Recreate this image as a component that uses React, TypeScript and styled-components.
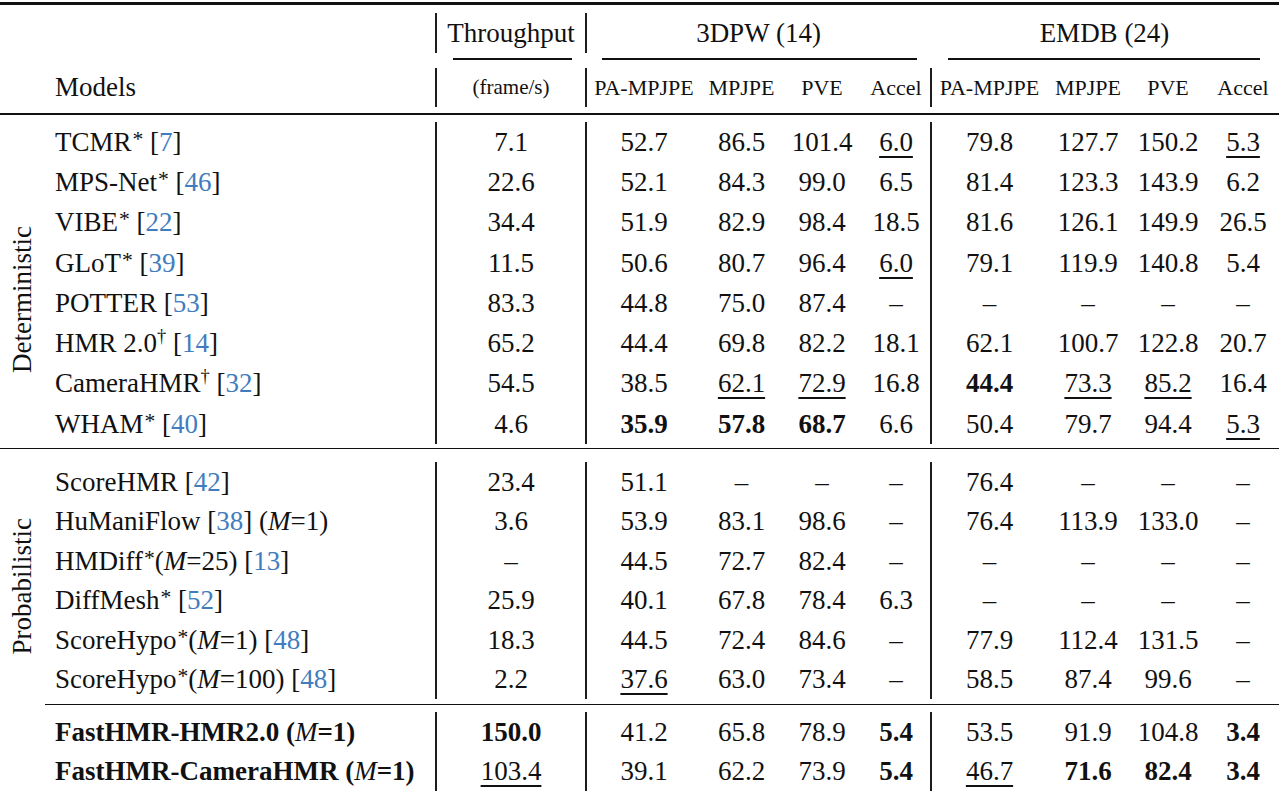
import React from 'react';
import styled, { createGlobalStyle } from 'styled-components';

const GlobalStyle = createGlobalStyle`
  html, body {
    margin: 0;
    padding: 0;
    background: #fff;
  }
  body {
    font-family: "Liberation Serif", "Times New Roman", serif;
    color: #111;
  }
`;

// '**' prefix = best result (bold), '_' prefix = second best (underlined)
type Val = string;

interface ModelRow {
  name: React.ReactNode;
  values: Val[];
}

const Cite = styled.span`
  color: #417dbe;
`;

const Sup = styled.sup`
  font-size: 0.68em;
  vertical-align: super;
  line-height: 0;
`;

const Star = styled.span`
  font-size: 0.8em;
  vertical-align: 0.22em;
  line-height: 0;
  margin-left: 1px;
`;

const MathVar = styled.i`
  font-style: italic;
  font-weight: 400;
`;

const Bold = styled.b`
  font-weight: 700;
`;

const Underlined = styled.span`
  text-decoration: underline;
  text-decoration-thickness: 1.5px;
  text-underline-offset: 5px;
`;

const ref = (n: number) => (
  <>
    [<Cite>{n}</Cite>]
  </>
);
const star = <Star>*</Star>;
const dagger = <Sup>†</Sup>;
const hyp = (k: number) => (
  <>
    (<MathVar>M</MathVar>={k})
  </>
);

const deterministic: ModelRow[] = [
  { name: <>TCMR{star} {ref(7)}</>, values: ['7.1', '52.7', '86.5', '101.4', '_6.0', '79.8', '127.7', '150.2', '_5.3'] },
  { name: <>MPS-Net{star} {ref(46)}</>, values: ['22.6', '52.1', '84.3', '99.0', '6.5', '81.4', '123.3', '143.9', '6.2'] },
  { name: <>VIBE{star} {ref(22)}</>, values: ['34.4', '51.9', '82.9', '98.4', '18.5', '81.6', '126.1', '149.9', '26.5'] },
  { name: <>GLoT{star} {ref(39)}</>, values: ['11.5', '50.6', '80.7', '96.4', '_6.0', '79.1', '119.9', '140.8', '5.4'] },
  { name: <>POTTER {ref(53)}</>, values: ['83.3', '44.8', '75.0', '87.4', '–', '–', '–', '–', '–'] },
  { name: <>HMR 2.0{dagger} {ref(14)}</>, values: ['65.2', '44.4', '69.8', '82.2', '18.1', '62.1', '100.7', '122.8', '20.7'] },
  { name: <>CameraHMR{dagger} {ref(32)}</>, values: ['54.5', '38.5', '_62.1', '_72.9', '16.8', '**44.4', '_73.3', '_85.2', '16.4'] },
  { name: <>WHAM{star} {ref(40)}</>, values: ['4.6', '**35.9', '**57.8', '**68.7', '6.6', '50.4', '79.7', '94.4', '_5.3'] },
];

const probabilistic: ModelRow[] = [
  { name: <>ScoreHMR {ref(42)}</>, values: ['23.4', '51.1', '–', '–', '–', '76.4', '–', '–', '–'] },
  { name: <>HuManiFlow {ref(38)} {hyp(1)}</>, values: ['3.6', '53.9', '83.1', '98.6', '–', '76.4', '113.9', '133.0', '–'] },
  { name: <>HMDiff{star}{hyp(25)} {ref(13)}</>, values: ['–', '44.5', '72.7', '82.4', '–', '–', '–', '–', '–'] },
  { name: <>DiffMesh{star} {ref(52)}</>, values: ['25.9', '40.1', '67.8', '78.4', '6.3', '–', '–', '–', '–'] },
  { name: <>ScoreHypo{star}{hyp(1)} {ref(48)}</>, values: ['18.3', '44.5', '72.4', '84.6', '–', '77.9', '112.4', '131.5', '–'] },
  { name: <>ScoreHypo{star}{hyp(100)} {ref(48)}</>, values: ['2.2', '_37.6', '63.0', '73.4', '–', '58.5', '87.4', '99.6', '–'] },
];

const ours: ModelRow[] = [
  {
    name: <><Bold>FastHMR-HMR2.0</Bold> <Bold>{hyp(1)}</Bold></>,
    values: ['**150.0', '41.2', '65.8', '78.9', '**5.4', '53.5', '91.9', '104.8', '**3.4'],
  },
  {
    name: <><Bold>FastHMR-CameraHMR</Bold> <Bold>{hyp(1)}</Bold></>,
    values: ['_103.4', '39.1', '62.2', '73.9', '**5.4', '_46.7', '**71.6', '**82.4', '**3.4'],
  },
];

const colWidths = [45, 390, 150, 116, 81, 80, 68, 117, 82, 78, 72];
const metrics = ['PA-MPJPE', 'MPJPE', 'PVE', 'Accel'];

const Page = styled.div`
  width: 1279px;
  height: 797px;
  overflow: hidden;
  background: #fff;
`;

const Table = styled.table`
  width: 1279px;
  table-layout: fixed;
  border-collapse: separate;
  border-spacing: 0;
  font-size: 27px;
`;

const Col = styled.col<{ $w: number }>`
  width: ${p => p.$w}px;
`;

const Row = styled.tr<{ $h: number }>`
  height: ${p => p.$h}px;
`;

const Cell = styled.td<{ $bar?: boolean }>`
  padding: 0;
  text-align: center;
  vertical-align: middle;
  white-space: nowrap;
  line-height: 1;
  border-left: ${p => (p.$bar ? '2px solid #1c1c1c' : 'none')};
`;

const NameCell = styled(Cell)`
  text-align: left;
  padding-left: 10px;
`;

const SubHead = styled(Cell)`
  font-size: 22px;
`;

const UnitHead = styled(Cell)`
  font-size: 21px;
`;

const GroupCell = styled.td<{ $shift: number }>`
  padding: ${p => p.$shift}px 0 0 0;
  vertical-align: middle;
  text-align: center;
`;

const GroupLabel = styled.span`
  display: inline-block;
  writing-mode: vertical-rl;
  transform: rotate(180deg);
  line-height: 1;
  white-space: nowrap;
`;

const RuleCell = styled.td`
  padding: 0;
  vertical-align: top;
  font-size: 0;
  line-height: 0;
`;

const Rule = styled.div<{ $thick: number; $top: number; $l?: number; $r?: number }>`
  height: ${p => p.$thick}px;
  margin: ${p => p.$top}px ${p => p.$r ?? 0}px 0 ${p => p.$l ?? 0}px;
  background: #111;
`;

function Value({ v }: { v: Val }) {
  if (v.startsWith('**')) return <Bold>{v.slice(2)}</Bold>;
  if (v.startsWith('_')) return <Underlined>{v.slice(1)}</Underlined>;
  return <>{v}</>;
}

function ValueCells({ values }: { values: Val[] }) {
  return (
    <>
      {values.map((v, i) => (
        <Cell key={i} $bar={i === 0 || i === 1 || i === 5}>
          <Value v={v} />
        </Cell>
      ))}
    </>
  );
}

export default function App() {
  return (
    <Page>
      <GlobalStyle />
      <Table>
        <colgroup>
          {colWidths.map((w, i) => (
            <Col key={i} $w={w} />
          ))}
        </colgroup>
        <tbody>
          <Row $h={13}>
            <RuleCell colSpan={11}>
              <Rule $thick={2.5} $top={2} />
            </RuleCell>
          </Row>

          <Row $h={40}>
            <Cell colSpan={2} />
            <Cell $bar>Throughput</Cell>
            <Cell $bar colSpan={4}>3DPW (14)</Cell>
            <Cell colSpan={4}>EMDB (24)</Cell>
          </Row>

          <Row $h={15}>
            <RuleCell colSpan={2} />
            <RuleCell>
              <Rule $thick={1.5} $top={5} $l={18} $r={13} />
            </RuleCell>
            <RuleCell colSpan={4}>
              <Rule $thick={1.5} $top={5} $l={17} $r={13} />
            </RuleCell>
            <RuleCell colSpan={4}>
              <Rule $thick={1.5} $top={5} $l={18} $r={19} />
            </RuleCell>
          </Row>

          <Row $h={39}>
            <Cell />
            <NameCell>Models</NameCell>
            <UnitHead $bar>(frame/s)</UnitHead>
            {metrics.map((m, i) => (
              <SubHead key={`a${m}`} $bar={i === 0}>{m}</SubHead>
            ))}
            {metrics.map((m, i) => (
              <SubHead key={`b${m}`} $bar={i === 0}>{m}</SubHead>
            ))}
          </Row>

          <Row $h={15}>
            <RuleCell colSpan={11}>
              <Rule $thick={1.5} $top={6} />
            </RuleCell>
          </Row>

          {deterministic.map((r, i) => (
            <Row key={`d${i}`} $h={40.3}>
              {i === 0 && (
                <GroupCell rowSpan={deterministic.length} $shift={40}>
                  <GroupLabel>Deterministic</GroupLabel>
                </GroupCell>
              )}
              <NameCell>{r.name}</NameCell>
              <ValueCells values={r.values} />
            </Row>
          ))}

          <Row $h={18}>
            <RuleCell colSpan={11}>
              <Rule $thick={1.5} $top={3.5} />
            </RuleCell>
          </Row>

          {probabilistic.map((r, i) => (
            <Row key={`p${i}`} $h={39.5}>
              {i === 0 && (
                <GroupCell rowSpan={probabilistic.length} $shift={18}>
                  <GroupLabel>Probabilistic</GroupLabel>
                </GroupCell>
              )}
              <NameCell>{r.name}</NameCell>
              <ValueCells values={r.values} />
            </Row>
          ))}

          <Row $h={13}>
            <RuleCell />
            <RuleCell colSpan={10}>
              <Rule $thick={1.5} $top={4.5} />
            </RuleCell>
          </Row>

          {ours.map((r, i) => (
            <Row key={`o${i}`} $h={39.5}>
              <Cell />
              <NameCell>{r.name}</NameCell>
              <ValueCells values={r.values} />
            </Row>
          ))}
        </tbody>
      </Table>
    </Page>
  );
}
